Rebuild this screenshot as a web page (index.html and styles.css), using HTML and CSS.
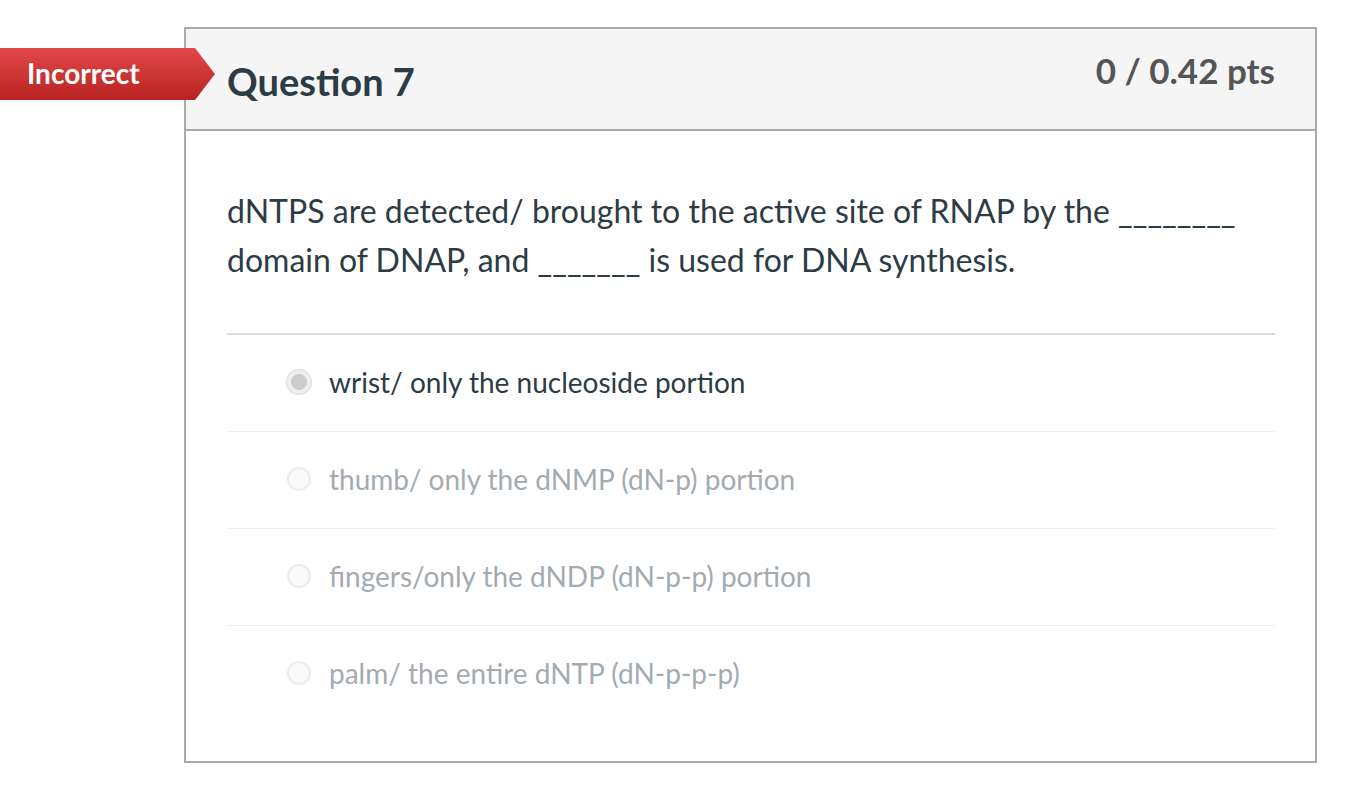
FILE: index.html
```html
<!DOCTYPE html>
<html lang="en">
<head>
<meta charset="utf-8">
<title>Question 7</title>
<link rel="stylesheet" href="styles.css">
</head>
<body>
<div class="page">
  <div class="badge"><span>Incorrect</span></div>
  <div class="card">
    <div class="card-header">
      <h2 class="q-title">Question 7</h2>
      <div class="q-pts">0 / 0.42 pts</div>
    </div>
    <div class="card-body">
      <p class="q-text">dNTPS are detected/ brought to the active site of RNAP by the ________ domain of DNAP, and _______ is used for DNA synthesis.</p>
      <ul class="answers">
        <li class="answer selected"><span class="radio"></span><span class="label">wrist/ only the nucleoside portion</span></li>
        <li class="answer"><span class="radio"></span><span class="label">thumb/ only the dNMP (dN-p) portion</span></li>
        <li class="answer"><span class="radio"></span><span class="label">fingers/only the dNDP (dN-p-p) portion</span></li>
        <li class="answer"><span class="radio"></span><span class="label">palm/ the entire dNTP (dN-p-p-p)</span></li>
      </ul>
    </div>
  </div>
</div>
</body>
</html>
```
FILE: styles.css
```css
html, body {
  margin: 0;
  padding: 0;
  background: #ffffff;
}
body {
  font-family: Lato, "Open Sans", "Liberation Sans", sans-serif;
  color: #2d3b45;
}
.page {
  position: relative;
  padding: 27px 0 0 184px;
}
.card {
  width: 1129px;
  border: 2px solid #aaaaaa;
  background: #ffffff;
}
.card-header {
  height: 100px;
  background: #f5f5f5;
  border-bottom: 2px solid #aaaaaa;
  display: flex;
  justify-content: space-between;
  align-items: flex-start;
  padding: 0 40px 0 41px;
}
.q-title {
  margin: 0;
  padding-top: 29px;
  font-size: 38px;
  line-height: 46px;
  font-weight: 700;
  color: #2d3b45;
}
.q-pts {
  padding-top: 20px;
  font-size: 35px;
  line-height: 42px;
  font-weight: 700;
  color: #555555;
}
.card-body {
  padding: 55px 40px 39px 41px;
}
.q-text {
  margin: 0 0 49px;
  font-size: 32px;
  line-height: 49px;
}
.answers {
  list-style: none;
  margin: 0;
  padding: 0;
  border-top: 2px solid #dddddd;
}
.answer {
  display: flex;
  align-items: center;
  padding: 32px 0 34px 60px;
  border-bottom: 1px solid #eeeeee;
  font-size: 28px;
  line-height: 30px;
  color: #a3abb1;
}
.answer:last-child {
  border-bottom: none;
}
.answer.selected {
  color: #2d3b45;
}
.radio {
  box-sizing: border-box;
  width: 24px;
  height: 24px;
  border-radius: 50%;
  border: 2px solid #ececec;
  background: #fafafa;
  margin-right: 18px;
  flex: none;
  position: relative;
}
.answer.selected .radio {
  border: 4px solid #eeeeee;
  background: #cccccc;
  box-shadow: 0 0 0 1px #dcdcdc;
}
.badge {
  position: absolute;
  left: 0;
  top: 48px;
  width: 215px;
  height: 52px;
  background: linear-gradient(#e4484a, #b62321);
  clip-path: polygon(0 0, 195px 0, 215px 26px, 195px 52px, 0 52px);
  box-sizing: border-box;
  padding-left: 27px;
  display: flex;
  align-items: center;
  z-index: 2;
}
.badge span {
  color: #ffffff;
  font-weight: 700;
  font-size: 28px;
  line-height: 30px;
  margin-top: -3px;
}
```
